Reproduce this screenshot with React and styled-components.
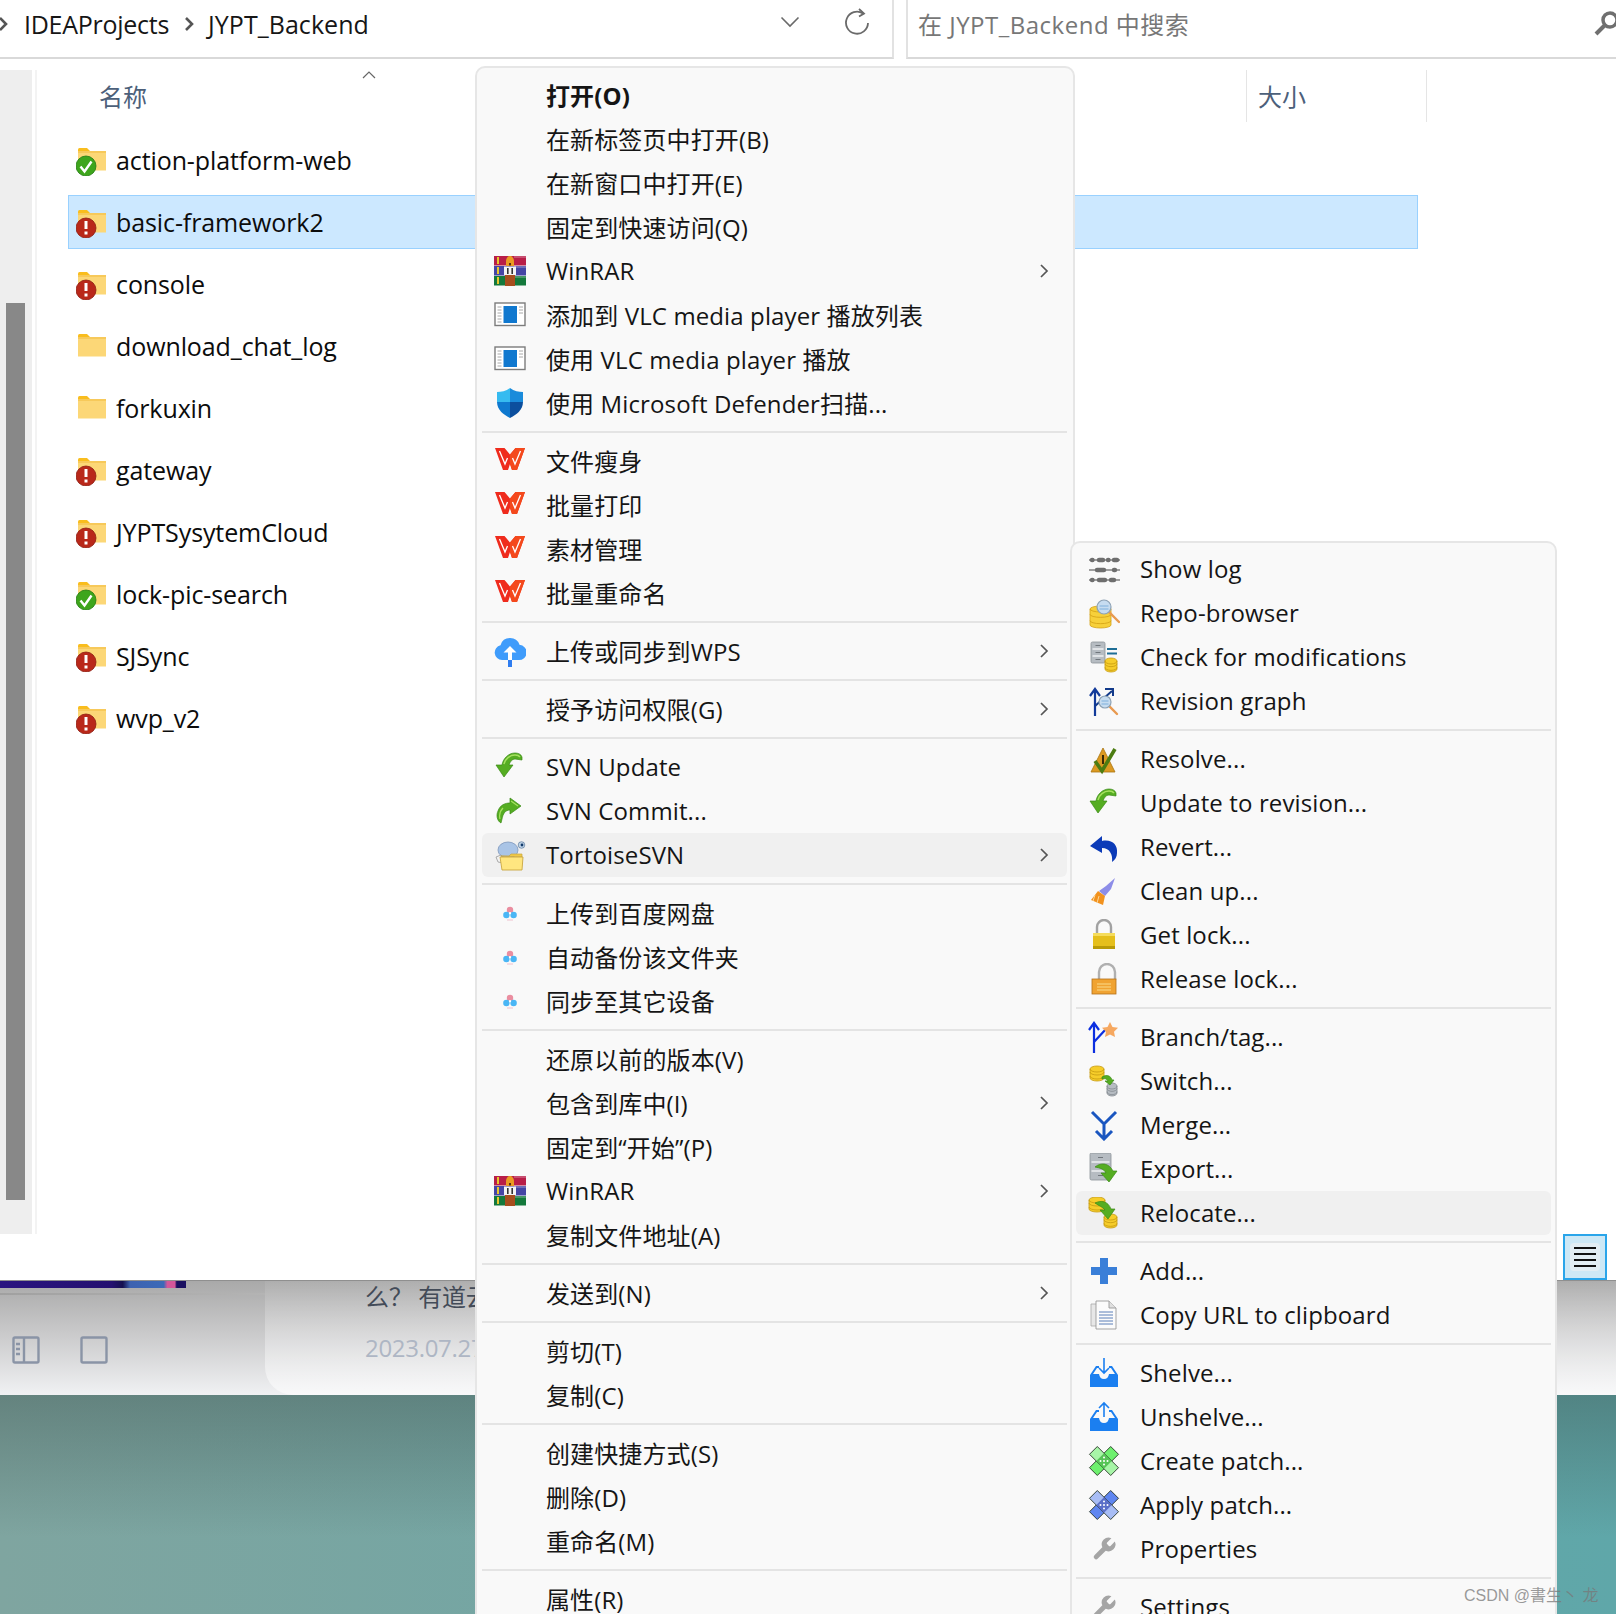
import React from 'react';
import styled, { createGlobalStyle } from 'styled-components';

const GlobalStyle = createGlobalStyle`
    html, body { margin: 0; padding: 0; background: #fff; }
    * { box-sizing: border-box; }
    body { font-family: "Open Sans", "Noto Sans CJK SC", sans-serif; }
`;

const Page = styled.div`
    width: 1616px;
    height: 1614px;
    position: relative;
    overflow: hidden;
    display: flex;
    flex-direction: column;
    color: #111;
    font-size: 24px;
`;

const Explorer = styled.div`
    height: 1280px;
    background: #fff;
    display: flex;
    flex-direction: column;
    flex: none;
`;

const AddressRow = styled.div`
    height: 59px;
    display: flex;
    flex: none;
`;

const AddressBox = styled.div`
    width: 894px;
    display: flex;
    align-items: center;
    border-right: 2px solid #e2e2e2;
    border-bottom: 2px solid #d9d9d9;
    padding-bottom: 9px;
`;

const Crumb = styled.span`
    color: #161616;
    font-size: 25px;
    letter-spacing: ${({ $wide }) => ($wide ? 0.05 : -0.27)}px;
`;

const CrumbSep = styled.svg`
    width: 10px;
    height: 16px;
    margin: ${({ $first }) => ($first ? '0 16px 0 -2px' : '0 14px 0 15px')};
    flex: none;
`;

const AddressTools = styled.div`
    margin-left: auto;
    display: flex;
    align-items: center;
    gap: 44px;
    padding: 0 22px 4px 0;
`;

const SearchBox = styled.div`
    margin-left: 12px;
    flex: 1;
    display: flex;
    align-items: center;
    justify-content: space-between;
    border-left: 2px solid #e2e2e2;
    border-bottom: 2px solid #d9d9d9;
    padding: 0 0 11px 10px;
    color: #777;
    letter-spacing: 0.5px;
    overflow: hidden;
`;

const Body = styled.div`
    margin-top: 11px;
    height: 1164px;
    display: flex;
    flex: none;
`;

const NavStrip = styled.div`
    width: 32px;
    background: #eeeeee;
    padding: 233px 7px 0 6px;
    flex: none;
`;

const Thumb = styled.div`
    height: 897px;
    background: #888;
`;

const Gutter = styled.div`
    width: 2px;
    margin-left: 3px;
    background: #f3f3f3;
    flex: none;
`;

const Details = styled.div`
    flex: 1;
`;

const HeaderRow = styled.div`
    height: 52px;
    display: flex;
    color: #4c607a;
`;

const NameColumn = styled.div`
    width: 1209px;
    padding: 8px 0 0 62px;
    position: relative;
`;

const SortCaret = styled.svg`
    position: absolute;
    left: 325px;
    top: 1px;
    width: 14px;
    height: 8px;
`;

const SizeColumn = styled.div`
    width: 181px;
    padding: 8px 0 0 11px;
    border-left: 1px solid #e5e5e5;
    border-right: 1px solid #e5e5e5;
`;

const FileList = styled.div`
    margin: 11px 0 0 31px;
    width: 1350px;
    display: flex;
    flex-direction: column;
    gap: 8px;
`;

const FileRow = styled.div`
    height: 54px;
    display: flex;
    align-items: center;
    gap: 8px;
    padding-left: 7px;
    font-size: 25px;
    letter-spacing: -0.1px;
    border: 1px solid ${({ $selected }) => ($selected ? '#99d1ff' : 'transparent')};
    background: ${({ $selected }) => ($selected ? '#cce8ff' : 'transparent')};
    color: #0c0c0c;
`;

const StatusRow = styled.div`
    flex: 1;
    display: flex;
    justify-content: flex-end;
    padding-right: 9px;
`;

const ViewToggle = styled.div`
    width: 44px;
    height: 46px;
    border: 2px solid #2aa5ea;
    background: #cde8f6;
    padding: 7px 5px;
`;

const ViewToggleInner = styled.div`
    height: 100%;
    background: #e2edf3;
    border-radius: 4px;
    display: flex;
    flex-direction: column;
    justify-content: center;
    gap: 4px;
    padding: 0 4px;
`;

const ViewLine = styled.div`
    height: 2px;
    background: #111;
`;

const BehindApp = styled.div`
    height: 115px;
    flex: none;
    display: flex;
    background: linear-gradient(180deg, #a9a9a9 0%, #c9c9ca 45%, #f0f1f3 100%);
    border-top: 1px solid #8f8f8f;
`;

const BehindLeft = styled.div`
    width: 265px;
    flex: none;
    display: flex;
    flex-direction: column;
`;

const ThumbBand = styled.div`
    width: 186px;
    height: 7px;
    background: linear-gradient(90deg, #2a1480 0, #241070 60%, #15104f 66%, #3d62b0 70%, #3c6ab8 88%, #d3579a 90%, #d3579a 94%, #1a1060 95%);
`;

const BehindRule = styled.div`
    height: 2px;
    margin-top: 5px;
    background: linear-gradient(90deg, #a0a0a0, #b4b4b4);
`;

const PaneTools = styled.div`
    display: flex;
    gap: 40px;
    padding: 41px 0 0 12px;
`;

const BehindCard = styled.div`
    flex: 1;
    border-bottom-left-radius: 28px;
    background: linear-gradient(180deg, rgba(255, 255, 255, 0.06), rgba(255, 255, 255, 0.55));
    padding: 0 0 0 100px;
`;

const CardTitle = styled.div`
    color: #434b58;
    margin-top: 1px;
    line-height: 30px;
    letter-spacing: -0.3px;
    white-space: pre;
`;

const CardDate = styled.div`
    color: #aeb6c4;
    margin-top: 21px;
    line-height: 30px;
    letter-spacing: -0.3px;
`;

const Wallpaper = styled.div`
    flex: 1;
    background:
        linear-gradient(180deg, rgba(60, 80, 76, 0.4), rgba(255, 255, 255, 0) 65%),
        linear-gradient(90deg, #7fa5a0, #5fa7a9);
`;

const Menu = styled.div`
    position: absolute;
    left: ${({ $left }) => $left}px;
    top: ${({ $top }) => $top}px;
    width: ${({ $width }) => $width}px;
    padding: ${({ $pad }) => $pad};
    background: #f9f9f9;
    border: 2px solid #e6e6e6;
    border-radius: 10px;
    letter-spacing: 0.12px;
`;

const Row = styled.div`
    height: 44px;
    display: flex;
    align-items: center;
    gap: 20px;
    padding: 0 18px 0 12px;
    border-radius: 6px;
    background: ${({ $hover }) => ($hover ? '#f0f0f0' : 'transparent')};
    font-weight: ${({ $bold }) => ($bold ? 700 : 400)};
    color: #151515;
    white-space: nowrap;
`;

const RowLabel = styled.span`
    margin-top: ${({ $sub }) => ($sub ? -1 : -2)}px;
`;

const IconSlot = styled.div`
    width: 32px;
    height: 32px;
    flex: none;
    & > svg { display: block; width: 32px; height: 32px; }
`;

const RowArrow = styled.svg`
    margin-left: auto;
    width: 10px;
    height: 16px;
    flex: none;
`;

const Divider = styled.div`
    height: 14px;
    display: flex;
    align-items: center;
    &::before {
        content: "";
        display: block;
        width: 100%;
        height: 1.5px;
        background: #e4e4e4;
    }
`;

const Watermark = styled.div`
    position: absolute;
    left: 1464px;
    top: 1586px;
    font: 16px "Liberation Sans", "Noto Sans CJK TC", sans-serif;
    line-height: 20px;
    color: rgba(120, 120, 120, 0.75);
    white-space: nowrap;
`;

const Svg = ({ children }) => <svg viewBox="0 0 32 32">{children}</svg>;

const Db = ({ x, y, w, h, fill = '#f6cd2a', edge = '#c79a10' }) => (
    <g>
        <path d={`M${x} ${y + 3}a${w / 2} 3 0 0 1 ${w} 0v${h - 6}a${w / 2} 3 0 0 1 ${-w} 0z`} fill={fill} stroke={edge} strokeWidth="0.8" />
        <path d={`M${x} ${y + h / 3 + 1}a${w / 2} 3 0 0 0 ${w} 0M${x} ${y + (2 * h) / 3}a${w / 2} 3 0 0 0 ${w} 0M${x} ${y + 3}a${w / 2} 3 0 0 0 ${w} 0`} fill="none" stroke={edge} strokeWidth="0.8" />
    </g>
);

const Cabinet = ({ x, y, w, h }) => (
    <g>
        <rect x={x} y={y} width={w} height={h} rx="1.5" fill="#b6bcc2" stroke="#8c9298" strokeWidth="0.8" />
        <path d={`M${x + 1.5} ${y + h / 3}h${w - 3}M${x + 1.5} ${y + (2 * h) / 3}h${w - 3}`} stroke="#eef0f2" strokeWidth="1.4" />
        <path d={`M${x + w / 2 - 2.5} ${y + h / 6}h5M${x + w / 2 - 2.5} ${y + h / 2}h5M${x + w / 2 - 2.5} ${y + (5 * h) / 6}h5`} stroke="#70767c" strokeWidth="1" />
    </g>
);

const GreenTurn = ({ d }) => <path d={d} fill="#55ad22" stroke="#3a8a16" strokeWidth="0.7" strokeLinejoin="round" />;

const Glass = ({ cx, cy, r, x2, y2 }) => (
    <g>
        <path d={`M${cx + r * 0.7} ${cy + r * 0.7}L${x2} ${y2}`} stroke="#e89a50" strokeWidth="2.4" strokeLinecap="round" />
        <circle cx={cx} cy={cy} r={r} fill="#c6dcf0" stroke="#8da2b5" strokeWidth="1.2" />
        <path d={`M${cx - r + 2.5} ${cy - 1}h${2 * r - 5}M${cx - r + 2.5} ${cy + 2}h${2 * r - 5}`} stroke="#7fb0dc" strokeWidth="1" />
    </g>
);

const Wps = () => (
    <Svg>
        <path d="M1 3h9.500L16 9.500 21.500 3H31l-8 22h-5l-2-6-2 6H9z" fill="#ef2b1d" />
        <path d="M16 9.500 21.500 3H31l-8 22h-5l-2-6z" fill="#f4491c" />
        <path d="M5.500 6 11 19l2.500-6M26.500 6 21 19l-2.500-6" fill="none" stroke="#fff" strokeWidth="1.300" />
    </Svg>
);

const Baidu = () => (
    <Svg>
        <circle cx="16" cy="13" r="3.200" fill="#ea8ea0" />
        <circle cx="12.400" cy="18" r="3.200" fill="#4ab6f5" />
        <circle cx="19.600" cy="18" r="3.200" fill="#4ab6f5" />
        <circle cx="16" cy="16.100" r="1.200" fill="#fff" />
        <path d="M13 23h6" stroke="#eeb4c4" strokeWidth="0.8" />
    </Svg>
);

const Vlc = () => (
    <Svg>
        <rect x="1" y="4" width="30" height="22.5" fill="#fff" stroke="#7c7c7c" strokeWidth="1.4" />
        <rect x="9.5" y="7" width="13.5" height="17" fill="#1078cf" />
        <path d="M3.5 8h4M3.5 11h4M3.5 14h4M3.5 17h4M3.5 20h4M3.5 23h4M25 8h4M25 11h4M25 14h4" stroke="#a8a8a8" strokeWidth="1" />
    </Svg>
);

const WinRar = () => (
    <Svg>
        <rect x="0" y="1" width="32" height="9.5" fill="#b81e48" />
        <rect x="0" y="11" width="32" height="9.5" fill="#4545a5" />
        <rect x="0" y="21" width="32" height="9.5" fill="#14793c" />
        <path d="M20 1h12v2H20zM20 11h12v2H20zM20 21h12v2H20z" fill="#fff" opacity="0.22" />
        <path d="M3 2h2v7H3zM3 12h2v7H3zM3 22h2v7H3z" fill="#e8c52c" />
        <rect x="11" y="20" width="10" height="11" fill="#a74e1e" />
        <rect x="10" y="11.5" width="12" height="8.5" fill="#f4f4f4" />
        <rect x="13" y="13" width="1.6" height="6" fill="#333" />
        <rect x="17.4" y="13" width="1.6" height="6" fill="#333" />
        <path d="M12 11V6.5C12 3 14 1 16 1s4 2 4 5.5V11z" fill="#eb9c22" />
        <rect x="15" y="8" width="2" height="2.4" fill="#5a2a10" />
    </Svg>
);

const Shield = () => (
    <Svg>
        <path d="M16 1C12 4 7 5 3 5v10h13z" fill="#36bbf0" />
        <path d="M16 1c4 3 9 4 13 4v10H16z" fill="#1a8bdb" />
        <path d="M3 15c0 8 7 13 13 16V15z" fill="#0f79cf" />
        <path d="M29 15c0 8-7 13-13 16V15z" fill="#0c4f9e" />
    </Svg>
);

const Cloud = () => (
    <Svg>
        <path d="M8 25a7.5 7.5 0 0 1-1.500-14.800A10 10 0 0 1 25.500 9.800 7.600 7.600 0 0 1 24.500 25z" fill="#3f9cfb" />
        <path d="M16 11l-6.500 6.500h4.500v7.500h4v-7.500h4.500z" fill="#fff" />
        <rect x="14" y="25" width="4" height="7" fill="#2f7df0" />
    </Svg>
);

const UpdateIcon = () => (
    <Svg>
        <GreenTurn d="M2 14h6c1-7 7-12 13-12 3 0 6 1 7 4v3l-7-1c-3 0-5 3-6 6h4l-9 12z" />
        <path d="M10 13c1-5 6-9 11-9 2 0 4 .5 5 2" fill="none" stroke="#a6e060" strokeWidth="1.5" />
    </Svg>
);

const CommitIcon = () => (
    <Svg>
        <GreenTurn d="M16 3l11 8-11 8v-4c-5 0-7 4-8 9l-1 4c-4-2-5-8-3-12 2-6 7-8 12-8z" />
        <path d="M17 6l7 5M6 24c-1-4 0-8 3-11" fill="none" stroke="#a6e060" strokeWidth="1.2" />
    </Svg>
);

const TortoiseIcon = () => (
    <Svg>
        <ellipse cx="14" cy="11" rx="10" ry="8" fill="#a9c4e6" stroke="#7d97bb" strokeWidth="0.8" />
        <path d="M2 18l5-2 2 8-5-1z" fill="#f2f2f2" stroke="#8d8d8d" strokeWidth="0.7" />
        <circle cx="27.500" cy="6" r="3.300" fill="#c0d4e8" stroke="#5c7a9c" strokeWidth="0.7" />
        <circle cx="28" cy="6" r="1.400" fill="#123a6a" />
        <path d="M7 17h8l2-2h11v3z" fill="#f0c947" stroke="#c9a640" strokeWidth="0.7" />
        <path d="M6 18h23l-1 13H8z" fill="#ffe680" stroke="#c9a640" strokeWidth="0.9" />
    </Svg>
);

const LogIcon = () => (
    <Svg>
        <g stroke="#808080" strokeWidth="1.400">
            <path d="M1 7h31M1 17h31M1 27h31" />
        </g>
        <g stroke="#6e6e6e" strokeWidth="4.400" strokeLinecap="round">
            <path d="M4 7h.5M11 7h4M20 7h.5M26 7h3M9 17h7M26 17h1M4 27h.5M11 27h6M23 27h3" />
        </g>
    </Svg>
);

const RepoIcon = () => (
    <Svg>
        <Db x={2} y={9} w={21} h={22} fill="#f7d03a" edge="#d3a114" />
        <Glass cx={16} cy={10} r={7} x2={31} y2={25} />
    </Svg>
);

const CheckModIcon = () => (
    <Svg>
        <Cabinet x={3} y={1} w={14} h={21} />
        <path d="M19 8h10M19 12.500h10" stroke="#1f6e96" strokeWidth="2.200" />
        <Db x={17} y={17} w={12} h={14} />
    </Svg>
);

const RevGraphIcon = () => (
    <Svg>
        <path d="M7 31V5M2 11l5-7 5 7" fill="none" stroke="#123a9a" strokeWidth="2.200" />
        <path d="M7 21 24 6M17 4h8v7" fill="none" stroke="#123a8a" strokeWidth="2" />
        <Glass cx={17} cy={17} r={6} x2={29} y2={29} />
    </Svg>
);

const ResolveIcon = () => (
    <Svg>
        <path d="M15 5 27 29H3z" fill="#dc9a22" stroke="#a87410" strokeWidth="0.8" />
        <path d="M15 12v9" stroke="#3a2a05" strokeWidth="2" />
        <path d="M7 18l7 10L27 6" fill="none" stroke="#4c7c12" strokeWidth="3.600" />
    </Svg>
);

const RevertIcon = () => (
    <Svg>
        <path d="M2 15 14 5v5c10-2 16 4 15 12 0 4-2 7-5 9 1-7-2-14-10-14v5z" fill="#0c3bb8" />
    </Svg>
);

const CleanIcon = () => (
    <Svg>
        <path d="M27 3 23 14l-6 7-6-5 7-5z" fill="#8d8de8" />
        <path d="M10 16l7 5-2 9-12-5z" fill="#f2921e" />
        <path d="M7 20l-2 6M11 21l-2 7" stroke="#fbd79a" strokeWidth="1" />
    </Svg>
);

const LockIcon = () => (
    <Svg>
        <path d="M9 15V8a7 7 0 0 1 14 0v7" fill="none" stroke="#a2a2a2" strokeWidth="2.400" />
        <rect x="5" y="14" width="22" height="16" fill="#e5bf1c" />
        <rect x="5" y="14" width="22" height="3" fill="#f5dc5c" />
        <rect x="5" y="27" width="22" height="3" fill="#b99a08" />
    </Svg>
);

const UnlockIcon = () => (
    <Svg>
        <path d="M11 17V9a8 8 0 0 1 16 0v8" fill="none" stroke="#b0b0b0" strokeWidth="2.400" />
        <rect x="4" y="16" width="24" height="15" fill="#f0a332" stroke="#b4701a" strokeWidth="0.8" />
        <path d="M9 21h14M9 24h14M9 27h14" stroke="#f9dc8a" strokeWidth="1.200" />
    </Svg>
);

const BranchIcon = () => (
    <Svg>
        <path d="M6 32V3M1 9l5-7 5 7M6 21 18 8" fill="none" stroke="#0c2fe0" strokeWidth="2.200" />
        <path d="M22 1l2.500 5 5.500.8-4 3.900 1 5.300-5-2.600-5 2.600 1-5.300-4-3.900 5.500-.8z" fill="#f6a860" />
    </Svg>
);

const SwitchIcon = () => (
    <Svg>
        <Db x={2} y={1} w={14} h={15} />
        <Db x={19} y={18} w={10} h={13} fill="#b6bcc2" edge="#848a90" />
        <GreenTurn d="M14 12c5-3 9-1 10 3h2l-4 5-5-4h3c-1-2-3-3-6-2z" />
    </Svg>
);

const MergeIcon = () => (
    <Svg>
        <path d="M4 3 16 15 28 3M16 15v15M8 22l8 8 8-8" fill="none" stroke="#1a56c0" strokeWidth="3" />
    </Svg>
);

const ExportIcon = () => (
    <Svg>
        <Cabinet x={2} y={0} w={21} h={27} />
        <GreenTurn d="M7 14c6-5 14-4 18 4h4l-8 11-8-9h5c-2-4-6-5-11-6z" />
    </Svg>
);

const RelocateIcon = () => (
    <Svg>
        <Db x={1} y={0} w={16} h={15} />
        <Db x={16} y={17} w={13} h={14} />
        <GreenTurn d="M7 6c6-3 13-2 16 6h4l-7 10-8-9h5c-2-3-6-4-10-7z" />
    </Svg>
);

const AddIcon = () => (
    <Svg>
        <path d="M12 3h8v9h9v8h-9v9h-8v-9H3v-8h9z" fill="#3a7fd8" />
    </Svg>
);

const CopyIcon = () => (
    <Svg>
        <path d="M3 5h10v22H3z" fill="#e7e7e7" stroke="#aaa" strokeWidth="0.8" />
        <path d="M8 2h13l7 7v21H8z" fill="#fbfbfb" stroke="#999" strokeWidth="0.9" />
        <path d="M21 2v7h7" fill="#e0e0e0" stroke="#999" strokeWidth="0.9" />
        <path d="M11 13h14M11 16h14M11 19h14M11 22h14M11 25h14" stroke="#5b7fb8" strokeWidth="1" />
    </Svg>
);

const Tray = () => (
    <path d="M2 18 8 9h3v2H9l-4 6h6c.5 3 2 5 5 5s4.500-2 5-5h6l-4-6h-2V9h3l6 9v12H2z" fill="#1b7ff0" />
);

const ShelveIcon = () => (
    <Svg>
        <Tray />
        <path d="M16 1v15M11 11l5 5 5-5" fill="none" stroke="#1b7ff0" strokeWidth="1.600" />
    </Svg>
);

const UnshelveIcon = () => (
    <Svg>
        <Tray />
        <path d="M16 16V2M11 7l5-5 5 5" fill="none" stroke="#1b7ff0" strokeWidth="1.600" />
    </Svg>
);

const PatchIcon = ({ a, b, c }) => (
    <Svg>
        <g stroke="#1c2a1c" strokeWidth="0.8">
            <rect x="-5.500" y="-15" width="11" height="30" transform="translate(16 16) rotate(45)" fill={a} />
            <rect x="-5.500" y="-15" width="11" height="30" transform="translate(16 16) rotate(-45)" fill={b} />
        </g>
        <rect x="10.500" y="10.500" width="11" height="11" transform="rotate(45 16 16)" fill={c} />
        <g fill="#fff">
            <circle cx="16" cy="12.500" r="1" />
            <circle cx="12.500" cy="16" r="1" />
            <circle cx="19.500" cy="16" r="1" />
            <circle cx="16" cy="19.500" r="1" />
            <circle cx="16" cy="16" r="1" />
        </g>
    </Svg>
);

const WrenchIcon = () => (
    <svg viewBox="-2 -2 28 28">
        <path
            d="M14.700 6.300a1 1 0 0 0 0 1.400l1.600 1.600a1 1 0 0 0 1.400 0l3.770-3.770a6 6 0 0 1-7.940 7.940l-6.910 6.910a2.120 2.120 0 0 1-3-3l6.910-6.910a6 6 0 0 1 7.940-7.940l-3.760 3.760z"
            fill="#a5a5a5"
        />
    </svg>
);

const Folder = ({ status }) => (
    <svg width="32" height="32" viewBox="0 0 32 32" style={{ flex: 'none' }}>
        <path d="M2 7V5.500A1.500 1.500 0 0 1 3.500 4H11l3 3z" fill="#f9bd1e" />
        <rect x="2" y="7" width="28" height="19.500" fill="#fcd777" />
        <rect x="2" y="7" width="28" height="2" fill="#f7c95a" />
        {status === 'ok' && (
            <g>
                <circle cx="10" cy="22" r="10" fill="#3ea51c" stroke="#1f7a10" strokeWidth="0.8" />
                <path d="M4.500 22.500l4 5 7-10" fill="none" stroke="#fff" strokeWidth="2.400" />
            </g>
        )}
        {status === 'err' && (
            <g>
                <circle cx="10" cy="22" r="10" fill="#b9281a" stroke="#8d1c10" strokeWidth="0.8" />
                <path d="M10 15v8" stroke="#fff" strokeWidth="3" />
                <rect x="8.500" y="25.500" width="3" height="3" fill="#fff" />
            </g>
        )}
    </svg>
);

const Chevron = ({ as: Comp, weight = 1.7, ...rest }) => (
    <Comp viewBox="0 0 10 16" {...rest}>
        <path d="M2 2l6 6-6 6" fill="none" stroke="#555" strokeWidth={weight} />
    </Comp>
);

const files = [
    ['action-platform-web', 'ok'],
    ['basic-framework2', 'err'],
    ['console', 'err'],
    ['download_chat_log', null],
    ['forkuxin', null],
    ['gateway', 'err'],
    ['JYPTSysytemCloud', 'err'],
    ['lock-pic-search', 'ok'],
    ['SJSync', 'err'],
    ['wvp_v2', 'err'],
];

const SEP = 'sep';

const mainItems = [
    { t: '打开(O)', bold: true },
    { t: '在新标签页中打开(B)' },
    { t: '在新窗口中打开(E)' },
    { t: '固定到快速访问(Q)' },
    { t: 'WinRAR', icon: <WinRar />, arrow: true },
    { t: '添加到 VLC media player 播放列表', icon: <Vlc /> },
    { t: '使用 VLC media player 播放', icon: <Vlc /> },
    { t: '使用 Microsoft Defender扫描...', icon: <Shield /> },
    SEP,
    { t: '文件瘦身', icon: <Wps /> },
    { t: '批量打印', icon: <Wps /> },
    { t: '素材管理', icon: <Wps /> },
    { t: '批量重命名', icon: <Wps /> },
    SEP,
    { t: '上传或同步到WPS', icon: <Cloud />, arrow: true },
    SEP,
    { t: '授予访问权限(G)', arrow: true },
    SEP,
    { t: 'SVN Update', icon: <UpdateIcon /> },
    { t: 'SVN Commit...', icon: <CommitIcon /> },
    { t: 'TortoiseSVN', icon: <TortoiseIcon />, arrow: true, hover: true },
    SEP,
    { t: '上传到百度网盘', icon: <Baidu /> },
    { t: '自动备份该文件夹', icon: <Baidu /> },
    { t: '同步至其它设备', icon: <Baidu /> },
    SEP,
    { t: '还原以前的版本(V)' },
    { t: '包含到库中(I)', arrow: true },
    { t: '固定到“开始”(P)' },
    { t: 'WinRAR', icon: <WinRar />, arrow: true },
    { t: '复制文件地址(A)' },
    SEP,
    { t: '发送到(N)', arrow: true },
    SEP,
    { t: '剪切(T)' },
    { t: '复制(C)' },
    SEP,
    { t: '创建快捷方式(S)' },
    { t: '删除(D)' },
    { t: '重命名(M)' },
    SEP,
    { t: '属性(R)' },
];

const subItems = [
    { t: 'Show log', icon: <LogIcon /> },
    { t: 'Repo-browser', icon: <RepoIcon /> },
    { t: 'Check for modifications', icon: <CheckModIcon /> },
    { t: 'Revision graph', icon: <RevGraphIcon /> },
    SEP,
    { t: 'Resolve...', icon: <ResolveIcon /> },
    { t: 'Update to revision...', icon: <UpdateIcon /> },
    { t: 'Revert...', icon: <RevertIcon /> },
    { t: 'Clean up...', icon: <CleanIcon /> },
    { t: 'Get lock...', icon: <LockIcon /> },
    { t: 'Release lock...', icon: <UnlockIcon /> },
    SEP,
    { t: 'Branch/tag...', icon: <BranchIcon /> },
    { t: 'Switch...', icon: <SwitchIcon /> },
    { t: 'Merge...', icon: <MergeIcon /> },
    { t: 'Export...', icon: <ExportIcon /> },
    { t: 'Relocate...', icon: <RelocateIcon />, hover: true },
    SEP,
    { t: 'Add...', icon: <AddIcon /> },
    { t: 'Copy URL to clipboard', icon: <CopyIcon /> },
    SEP,
    { t: 'Shelve...', icon: <ShelveIcon /> },
    { t: 'Unshelve...', icon: <UnshelveIcon /> },
    { t: 'Create patch...', icon: <PatchIcon a="#6ef06e" b="#a8f5a8" c="#56c456" /> },
    { t: 'Apply patch...', icon: <PatchIcon a="#5f86f0" b="#a8bdf5" c="#5a6fc8" /> },
    { t: 'Properties', icon: <WrenchIcon /> },
    SEP,
    { t: 'Settings', icon: <WrenchIcon /> },
];

const MenuList = ({ items, sub }) =>
    items.map((item, i) =>
        item === SEP ? (
            <Divider key={i} />
        ) : (
            <Row key={i} $hover={item.hover} $bold={item.bold}>
                <IconSlot>{item.icon}</IconSlot>
                <RowLabel $sub={sub}>{item.t}</RowLabel>
                {item.arrow && <Chevron as={RowArrow} />}
            </Row>
        )
    );

const App = () => (
    <Page>
        <GlobalStyle />
        <Explorer>
            <AddressRow>
                <AddressBox>
                    <Chevron as={CrumbSep} weight={2.6} $first />
                    <Crumb>IDEAProjects</Crumb>
                    <Chevron as={CrumbSep} weight={2.6} />
                    <Crumb $wide>JYPT_Backend</Crumb>
                    <AddressTools>
                        <svg width="20" height="12" viewBox="0 0 20 12">
                            <path d="M1.500 1.500 10 10l8.500-8.500" fill="none" stroke="#6a6a6a" strokeWidth="1.600" />
                        </svg>
                        <svg width="26" height="28" viewBox="0 0 26 28">
                            <path d="M19 5.500A11 11 0 1 0 24 15" fill="none" stroke="#6a6a6a" strokeWidth="1.800" />
                            <path d="M15 1l5 4.500-5 3" fill="none" stroke="#6a6a6a" strokeWidth="1.800" />
                        </svg>
                    </AddressTools>
                </AddressBox>
                <SearchBox>
                    在 JYPT_Backend 中搜索
                    <svg width="22" height="26" viewBox="0 0 22 26" style={{ flex: 'none' }}>
                        <circle cx="16" cy="10" r="7" fill="none" stroke="#6f6f6f" strokeWidth="3.500" />
                        <path d="M11 15 2 24" stroke="#6f6f6f" strokeWidth="4" />
                    </svg>
                </SearchBox>
            </AddressRow>
            <Body>
                <NavStrip>
                    <Thumb />
                </NavStrip>
                <Gutter />
                <Details>
                    <HeaderRow>
                        <NameColumn>
                            <SortCaret viewBox="0 0 14 8">
                                <path d="M1 7l6-6 6 6" fill="none" stroke="#666" strokeWidth="1.200" />
                            </SortCaret>
                            名称
                        </NameColumn>
                        <SizeColumn>大小</SizeColumn>
                    </HeaderRow>
                    <FileList>
                        {files.map(([name, status]) => (
                            <FileRow key={name} $selected={name === 'basic-framework2'}>
                                <Folder status={status} />
                                {name}
                            </FileRow>
                        ))}
                    </FileList>
                </Details>
            </Body>
            <StatusRow>
                <ViewToggle>
                    <ViewToggleInner>
                        <ViewLine />
                        <ViewLine />
                        <ViewLine />
                        <ViewLine />
                    </ViewToggleInner>
                </ViewToggle>
            </StatusRow>
        </Explorer>
        <BehindApp>
            <BehindLeft>
                <ThumbBand />
                <BehindRule />
                <PaneTools>
                    <svg width="28" height="28" viewBox="0 0 28 28">
                        <rect x="1.500" y="1.500" width="25" height="25" rx="1.500" fill="none" stroke="#8a94a6" strokeWidth="2.400" />
                        <path d="M12 1.500v25" stroke="#8a94a6" strokeWidth="2.400" />
                        <path d="M4 8h4M4 13h4M4 18h4" stroke="#8a94a6" strokeWidth="2.400" />
                    </svg>
                    <svg width="28" height="28" viewBox="0 0 28 28">
                        <rect x="1.500" y="1.500" width="25" height="25" rx="1.500" fill="none" stroke="#8a94a6" strokeWidth="2.400" />
                    </svg>
                </PaneTools>
            </BehindLeft>
            <BehindCard>
                <CardTitle>么？ 有道云</CardTitle>
                <CardDate>2023.07.27</CardDate>
            </BehindCard>
        </BehindApp>
        <Wallpaper />
        <Menu $left={475} $top={66} $width={600} $pad="5px 6px 5px 5px">
            <MenuList items={mainItems} />
        </Menu>
        <Menu $left={1070} $top={541} $width={487} $pad="4px">
            <MenuList items={subItems} sub />
        </Menu>
        <Watermark>CSDN @書生丶 龙</Watermark>
    </Page>
);

export default App;
